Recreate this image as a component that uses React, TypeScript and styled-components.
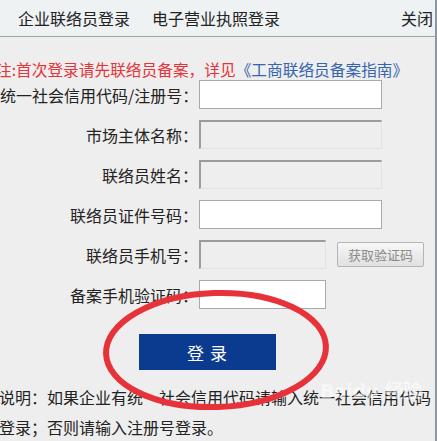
import styled, { createGlobalStyle } from 'styled-components';

const GlobalStyle = createGlobalStyle`
  html, body {
    margin: 0;
    padding: 0;
    background: #eeeeee;
  }
  body {
    font-family: "Noto Sans CJK SC", "Noto Sans", sans-serif;
  }
`;

const fields = [
  { label: '统一社会信用代码/注册号：', disabled: false, short: false },
  { label: '市场主体名称：', disabled: true, short: false },
  { label: '联络员姓名：', disabled: true, short: false },
  { label: '联络员证件号码：', disabled: false, short: false },
  { label: '联络员手机号：', disabled: true, short: true, code: true },
  { label: '备案手机验证码：', disabled: false, short: true },
];

const App = () => {
  return (
    <>
      <GlobalStyle />
      <Page>
        <TopBar>
          <Tab>企业联络员登录</Tab>
          <Tab>电子营业执照登录</Tab>
          <Close>关闭</Close>
        </TopBar>
        <Note>
          注:首次登录请先联络员备案，详见<Guide>《工商联络员备案指南》</Guide>
        </Note>
        <Form>
          {fields.map(f => (
            <Row key={f.label}>
              <Label>{f.label}</Label>
              <Field>
                <Input disabled={f.disabled} $short={f.short} />
                {f.code && <CodeButton>获取验证码</CodeButton>}
              </Field>
            </Row>
          ))}
        </Form>
        <LoginButton>登 录</LoginButton>
        <Explain>
          说明：如果企业有统一社会信用代码请输入统一社会信用代码
          <br />
          登录；否则请输入注册号登录。
        </Explain>
        <Watermark>Baidu 经验</Watermark>
        <Circle width="437" height="441" viewBox="0 0 437 441">
          <ellipse
            cx="216"
            cy="350"
            rx="110"
            ry="57"
            fill="none"
            stroke="#e8323a"
            strokeWidth="6"
            transform="rotate(-2 216 350)"
          />
        </Circle>
      </Page>
    </>
  );
};

export default App;

const Page = styled.div`
  position: relative;
  width: 437px;
  height: 441px;
  overflow: hidden;
  background: #eeeeee;
  border-right: 2px solid #8e979f;
  box-sizing: border-box;
  color: #222;
`;
const TopBar = styled.div`
  display: flex;
  align-items: center;
  height: 36px;
  padding: 0 2px 0 18px;
  background: #eef2f3;
  border-bottom: 1px solid #9ea6ab;
  font-size: 16px;
`;
const Tab = styled.span`
  margin-right: 22px;
  line-height: 20px;
`;
const Close = styled.span`
  margin-left: auto;
  line-height: 20px;
`;
const Note = styled.div`
  margin: 23px 0 0 -4px;
  font-size: 15.7px;
  line-height: 20px;
  color: #e5343a;
  white-space: nowrap;
`;
const Guide = styled.span`
  color: #3566ad;
`;
const Form = styled.div`
  display: flex;
  flex-direction: column;
  gap: 11px;
`;
const Row = styled.div`
  display: grid;
  grid-template-columns: 198px 1fr;
  align-items: center;
  height: 29px;
`;
const Label = styled.span`
  text-align: right;
  font-size: 16px;
  line-height: 20px;
  white-space: nowrap;
  direction: rtl;
  unicode-bidi: plaintext;
`;
const Field = styled.div`
  display: flex;
  align-items: center;
  padding-left: 1px;
`;
const Input = styled.input<{ $short: boolean }>`
  box-sizing: border-box;
  width: ${p => (p.$short ? '127px' : '183px')};
  height: 29px;
  margin: 0;
  background: #fff;
  border: 1px solid #a9a9a9;
  &:disabled {
    background: #eeeeee;
    border-top: 2px solid #9c9c9c;
    border-left: 2px solid #9c9c9c;
    border-right: 1px solid #e2e2e2;
    border-bottom: 1px solid #e2e2e2;
  }
`;
const CodeButton = styled.button`
  box-sizing: border-box;
  margin-left: 11px;
  width: 87px;
  height: 25px;
  padding: 0;
  border: 1px solid #b5b5b5;
  border-radius: 2px;
  background: linear-gradient(#f7f7f7, #e1e1e1);
  color: #8a8a8a;
  font-family: "Noto Sans CJK SC", sans-serif;
  font-size: 13px;
  line-height: 23px;
`;
const LoginButton = styled.button`
  display: block;
  box-sizing: border-box;
  margin: 25px 0 0 139px;
  width: 137px;
  height: 36px;
  border: none;
  background: #0b3b8e;
  color: #fff;
  font-family: "Noto Sans CJK SC", sans-serif;
  font-size: 17px;
  letter-spacing: 1px;
`;
const Explain = styled.div`
  margin: 12px 0 0 -1px;
  font-size: 16px;
  line-height: 30px;
  white-space: nowrap;
`;
const Watermark = styled.div`
  position: absolute;
  left: 320px;
  top: 376px;
  white-space: nowrap;
  font-family: "DejaVu Sans", "Noto Sans CJK SC", sans-serif;
  font-size: 19px;
  font-weight: bold;
  letter-spacing: -0.5px;
  color: rgba(255, 255, 255, 0.55);
  pointer-events: none;
`;
const Circle = styled.svg`
  position: absolute;
  left: 0;
  top: 0;
  pointer-events: none;
`;
